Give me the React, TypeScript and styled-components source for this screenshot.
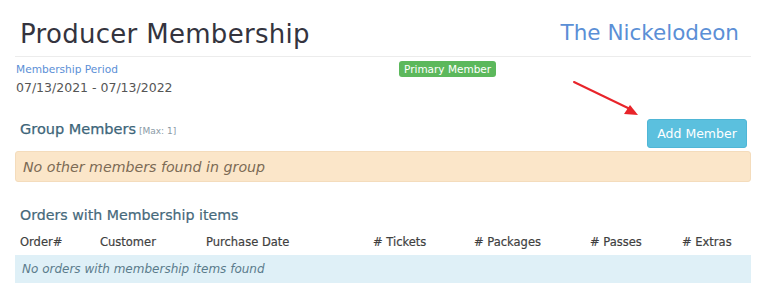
import React from "react";
import styled, { createGlobalStyle } from "styled-components";

const Global = createGlobalStyle`
  html, body { margin: 0; padding: 0; background: #fff; }
  body { font-family: "DejaVu Sans", "Noto Sans", sans-serif; color: #444; }
  * { box-sizing: border-box; }
`;

const Page = styled.div`
  position: relative;
  width: 768px;
  height: 298px;
  padding: 0 17px 0 15px;
  overflow: hidden;
`;

const TitleRow = styled.div`
  display: flex;
  justify-content: space-between;
  align-items: flex-end;
  height: 57px;
  padding: 0 12px 7px 5px;
  border-bottom: 1px solid #ececec;
`;

const Title = styled.h1`
  margin: 0;
  font-size: 26px;
  font-weight: 400;
  color: #34343e;
  line-height: 30px;
  letter-spacing: 0.3px;
`;

const Venue = styled.div`
  font-size: 21.5px;
  color: #5b8fd6;
  line-height: 28px;
  margin-bottom: 2px;
`;

const InfoGrid = styled.div`
  display: grid;
  grid-template-columns: 1fr 1fr;
  padding-top: 5px;
`;

const Period = styled.div`
  display: flex;
  flex-direction: column;
  padding-left: 1px;
`;

const Label = styled.span`
  font-size: 10.6px;
  color: #5b8fd6;
  line-height: 14px;
`;

const DateText = styled.span`
  font-size: 12.5px;
  color: #555;
  line-height: 20px;
  margin-top: 2px;
`;

const BadgeCell = styled.div`
  padding-left: 16px;
  margin-top: -4px;
`;

const Badge = styled.span`
  display: inline-block;
  background: #5cb85c;
  color: #fff;
  font-size: 10.5px;
  line-height: 16px;
  height: 16px;
  padding: 0 5px;
  border-radius: 3px;
`;

const SectionHead = styled.div`
  display: flex;
  justify-content: space-between;
  align-items: flex-end;
  margin-top: 21px;
  padding-left: 5px;
  padding-right: 4px;
`;

const SectionTitle = styled.h2`
  margin: 0;
  font-size: 14.5px;
  font-weight: 400;
  color: #3d6579;
  line-height: 18px;
  padding-bottom: 8px;
  -webkit-text-stroke: 0.25px #3d6579;
`;

const Small = styled.span`
  font-size: 9px;
  color: #8a9aa6;
  font-weight: 400;
  margin-left: 3px;
  -webkit-text-stroke: 0;
`;

const Button = styled.button`
  height: 29px;
  width: 100px;
  background: #5bc0de;
  border: 1px solid #4fb6d6;
  border-radius: 3px;
  color: #fff;
  font-family: inherit;
  font-size: 12.5px;
  padding: 0;
`;

const Alert = styled.div<{ $tone: "warn" | "info" }>`
  margin-top: ${(p) => (p.$tone === "warn" ? "3px" : "0")};
  height: ${(p) => (p.$tone === "warn" ? "31px" : "28px")};
  display: flex;
  align-items: center;
  padding-left: ${(p) => (p.$tone === "warn" ? "7px" : "6px")};
  background: ${(p) => (p.$tone === "warn" ? "#fbe6c9" : "#dff0f7")};
  border: 1px solid ${(p) => (p.$tone === "warn" ? "#f4dcbc" : "#dff0f7")};
  border-radius: ${(p) => (p.$tone === "warn" ? "3px" : "0")};
  color: ${(p) => (p.$tone === "warn" ? "#7c6b55" : "#5b7c8c")};
  font-style: italic;
  font-size: ${(p) => (p.$tone === "warn" ? "14.2px" : "12px")};
`;

const OrdersTitle = styled.h2`
  margin: 24px 0 0 5px;
  font-size: 14.2px;
  font-weight: 400;
  color: #46697b;
  line-height: 18px;
  -webkit-text-stroke: 0.2px #46697b;
`;

const TableHead = styled.div`
  display: grid;
  grid-template-columns: 80px 106px 167px 101px 116px 92px 1fr;
  padding-left: 5px;
  margin-top: 5px;
  height: 26px;
  align-items: center;
`;

const Th = styled.span`
  font-size: 11.5px;
  font-weight: 400;
  color: #3f3f3f;
  -webkit-text-stroke: 0.2px #3f3f3f;
`;

const Arrow = styled.svg`
  position: absolute;
  left: 570px;
  top: 78px;
`;

export default function App() {
  const cols = ["Order#", "Customer", "Purchase Date", "# Tickets", "# Packages", "# Passes", "# Extras"];
  return (
    <>
      <Global />
      <Page>
        <TitleRow>
          <Title>Producer Membership</Title>
          <Venue>The Nickelodeon</Venue>
        </TitleRow>
        <InfoGrid>
          <Period>
            <Label>Membership Period</Label>
            <DateText>07/13/2021 - 07/13/2022</DateText>
          </Period>
          <BadgeCell>
            <Badge>Primary Member</Badge>
          </BadgeCell>
        </InfoGrid>
        <SectionHead>
          <SectionTitle>
            Group Members<Small>[Max: 1]</Small>
          </SectionTitle>
          <Button>Add Member</Button>
        </SectionHead>
        <Alert $tone="warn">No other members found in group</Alert>
        <OrdersTitle>Orders with Membership items</OrdersTitle>
        <TableHead>
          {cols.map((c) => (
            <Th key={c}>{c}</Th>
          ))}
        </TableHead>
        <Alert $tone="info">No orders with membership items found</Alert>
        <Arrow width="80" height="45" viewBox="0 0 80 45">
          <line x1="4" y1="4" x2="60" y2="31" stroke="#e8242a" strokeWidth="2" strokeLinecap="round" />
          <polygon points="68,37 54,36 60,27" fill="#e8242a" />
        </Arrow>
      </Page>
    </>
  );
}
